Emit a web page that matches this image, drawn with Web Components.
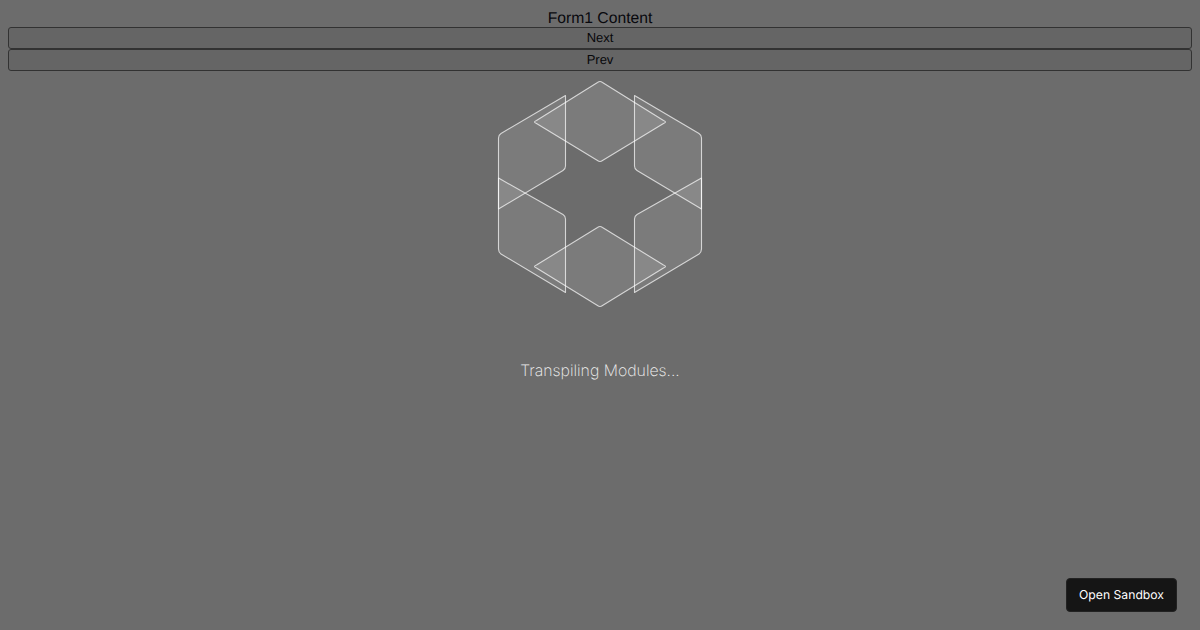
<!DOCTYPE html>
<html>
<head>
<meta charset="utf-8">
<title>Form1</title>
<style>
  html, body { height: 100%; }
  body { margin: 8px; background: #fff; font-family: "Liberation Sans", Arial, sans-serif; color: #14141f; text-rendering: geometricPrecision; }
</style>
</head>
<body>
<template id="form-step">
  <style>
    :host { display: flex; flex-direction: column; }
    .title { font-size: 15.7px; line-height: 19px; text-align: center; height: 19px; padding-top: 1px; margin-bottom: -1px; }
    button {
      display: block; width: 100%; height: 22px; margin: 0; padding: 0 0 2px;
      box-sizing: border-box; font: 13px "Liberation Sans", Arial, sans-serif; color: #14141a;
      text-rendering: geometricPrecision;
      background: #efefef; border: 1px solid #767676; border-radius: 3px;
    }
  </style>
  <div class="title"><slot></slot></div>
  <button>Next</button>
  <button>Prev</button>
</template>

<template id="sandbox-loader">
  <style>
    :host {
      position: absolute; inset: 0; display: flex; flex-direction: column; align-items: center;
      background: rgba(0, 0, 0, 0.576);
    }
    .mark { margin-top: 80px; width: 206px; height: 228px; display: block; }
    .status {
      margin-top: 51px; font: 200 15.85px/24px Inter, "Liberation Sans", sans-serif; color: #f2f2f2;
    }
  </style>
  <svg class="mark" viewBox="497 80 206 228" fill="rgba(255,255,255,0.1)" stroke="rgba(255,255,255,0.7)" stroke-width="1.1" stroke-linejoin="round">
    <!-- top and bottom diamonds -->
    <path d="M597.5 82.5Q600 80.500 602.5 82.5L663.5 120.5Q667.500 122 663.5 123.5L602.5 160.500Q600 162.500 597.5 160.500L536.5 123.5Q532.500 122 536.5 120.5Z"/>
    <path d="M597.5 227.500Q600 225.500 602.5 227.500L663.5 265Q667.500 266.500 663.5 268L602.5 305.500Q600 307.500 597.5 305.500L536.5 268Q532.500 266.500 536.5 265Z"/>
    <!-- left pieces -->
    <path d="M565.5 95.5V166Q565.5 169 563 170.5L498.5 209V138Q498.5 135 501 133.500Z"/>
    <path d="M498.5 178L563 214.500Q565.5 216 565.5 219V292.500L501 254Q498.5 252 498.5 249Z"/>
    <!-- right pieces -->
    <path d="M634.5 95.5V166Q634.500 169 637 170.5L701.5 209V138Q701.5 135 699 133.500Z"/>
    <path d="M701.5 178L637 214.500Q634.5 216 634.5 219V292.500L699 254Q701.5 252 701.5 249Z"/>
  </svg>
  <div class="status"><slot></slot></div>
</template>

<template id="open-sandbox">
  <style>
    :host { position: absolute; right: 23px; bottom: 18px; display: block; }
    a {
      display: flex; align-items: center; justify-content: center;
      width: 111px; height: 34px; box-sizing: border-box; padding-bottom: 1px;
      background: #151515; border: 1px solid #222; border-radius: 4px;
      font: 400 12.2px Inter, "Liberation Sans", sans-serif; color: #fff; text-decoration: none;
    }
  </style>
  <a href="#"><slot></slot></a>
</template>

<form-step>Form1 Content</form-step>
<sandbox-loader>Transpiling Modules...</sandbox-loader>
<open-sandbox>Open Sandbox</open-sandbox>

<script>
  function fromTemplate(name) {
    return class extends HTMLElement {
      constructor() {
        super();
        this.attachShadow({ mode: 'open' }).appendChild(document.getElementById(name).content.cloneNode(true));
      }
    };
  }
  customElements.define('form-step', fromTemplate('form-step'));
  customElements.define('sandbox-loader', fromTemplate('sandbox-loader'));
  customElements.define('open-sandbox', fromTemplate('open-sandbox'));
</script>
</body>
</html>
